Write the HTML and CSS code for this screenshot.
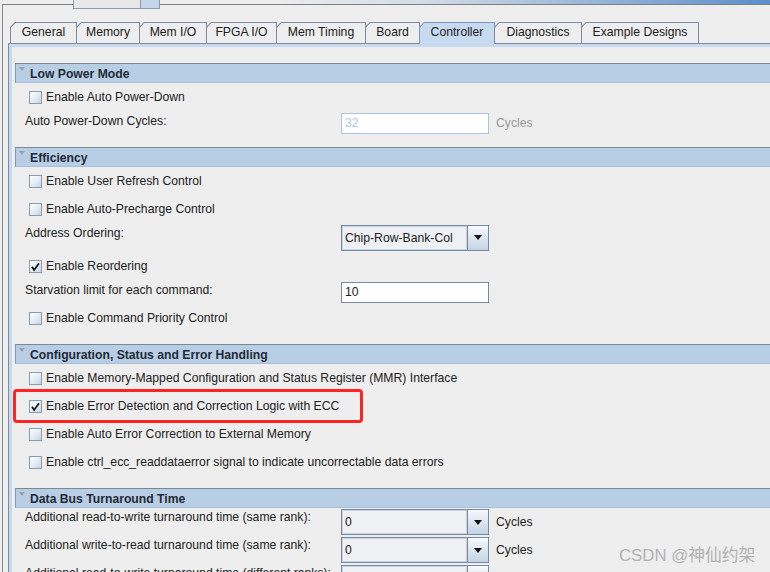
FILE: index.html
```html
<!DOCTYPE html>
<html>
<head>
<meta charset="utf-8">
<link rel="stylesheet" href="styles.css">
</head>
<body>
<div class="topstrip"></div>
<div class="thumb"></div>
<div class="thumb2"></div>
<div class="frame">
  <div class="tabpane">
    <div class="tabs">
      <div class="tab"><div class="tab-in">General</div></div>
      <div class="tab"><div class="tab-in">Memory</div></div>
      <div class="tab"><div class="tab-in">Mem I/O</div></div>
      <div class="tab"><div class="tab-in">FPGA I/O</div></div>
      <div class="tab"><div class="tab-in">Mem Timing</div></div>
      <div class="tab"><div class="tab-in">Board</div></div>
      <div class="tab sel"><div class="tab-in">Controller</div></div>
      <div class="tab"><div class="tab-in">Diagnostics</div></div>
      <div class="tab"><div class="tab-in">Example Designs</div></div>
    </div>
    <div class="panel">
      <div class="panel-in">
        <section class="sec">
          <div class="sec-head"><span class="tri"></span>Low Power Mode</div>
          <div class="sec-body">
            <div class="cb-row"><span class="cb"></span><span>Enable Auto Power-Down</span></div>
            <div class="field-row">
              <span class="lbl">Auto Power-Down Cycles:</span>
              <span class="input dis">32</span>
              <span class="unit dim">Cycles</span>
            </div>
          </div>
        </section>
        <section class="sec">
          <div class="sec-head"><span class="tri"></span>Efficiency</div>
          <div class="sec-body">
            <div class="cb-row"><span class="cb"></span><span>Enable User Refresh Control</span></div>
            <div class="cb-row"><span class="cb"></span><span>Enable Auto-Precharge Control</span></div>
            <div class="field-row">
              <span class="lbl">Address Ordering:</span>
              <span class="combo"><span class="combo-text">Chip-Row-Bank-Col</span><span class="combo-btn"></span></span>
            </div>
            <div class="cb-row"><span class="cb on"><svg width="11" height="11" viewBox="0 0 11 11"><path d="M2 5.8 L4.1 9 L9 2.2" fill="none" stroke="#111" stroke-width="1.7"/></svg></span><span>Enable Reordering</span></div>
            <div class="field-row">
              <span class="lbl">Starvation limit for each command:</span>
              <span class="input">10</span>
            </div>
            <div class="cb-row"><span class="cb"></span><span>Enable Command Priority Control</span></div>
          </div>
        </section>
        <section class="sec">
          <div class="sec-head"><span class="tri"></span>Configuration, Status and Error Handling</div>
          <div class="sec-body">
            <div class="cb-row"><span class="cb"></span><span>Enable Memory-Mapped Configuration and Status Register (MMR) Interface</span></div>
            <div class="cb-row"><span class="cb on"><svg width="11" height="11" viewBox="0 0 11 11"><path d="M2 5.8 L4.1 9 L9 2.2" fill="none" stroke="#111" stroke-width="1.7"/></svg></span><span>Enable Error Detection and Correction Logic with ECC</span></div>
            <div class="cb-row"><span class="cb"></span><span>Enable Auto Error Correction to External Memory</span></div>
            <div class="cb-row"><span class="cb"></span><span>Enable ctrl_ecc_readdataerror signal to indicate uncorrectable data errors</span></div>
          </div>
        </section>
        <section class="sec">
          <div class="sec-head"><span class="tri"></span>Data Bus Turnaround Time</div>
          <div class="sec-body">
            <div class="field-row tight">
              <span class="lbl">Additional read-to-write turnaround time (same rank):</span>
              <span class="combo"><span class="combo-text">0</span><span class="combo-btn"></span></span>
              <span class="unit">Cycles</span>
            </div>
            <div class="field-row tight">
              <span class="lbl">Additional write-to-read turnaround time (same rank):</span>
              <span class="combo"><span class="combo-text">0</span><span class="combo-btn"></span></span>
              <span class="unit">Cycles</span>
            </div>
            <div class="field-row tight">
              <span class="lbl">Additional read-to-write turnaround time (different ranks):</span>
              <span class="combo"><span class="combo-text">0</span><span class="combo-btn"></span></span>
              <span class="unit">Cycles</span>
            </div>
          </div>
        </section>
      </div>
    </div>
  </div>
</div>
<div class="redbox"></div>
<div class="watermark">CSDN @神仙约架</div>
</body>
</html>
```
FILE: styles.css
```css
* { box-sizing: border-box; }
html, body { margin: 0; padding: 0; }
body {
  width: 770px;
  height: 572px;
  overflow: hidden;
  position: relative;
  background: #eeeeee;
  font-family: "Liberation Sans", Arial, sans-serif;
  font-size: 12.2px;
  color: #222222;
}
.topstrip {
  height: 4px;
  background: linear-gradient(to right, #eeeeee 0px, #eeeeee 260px, #d3dde8 420px, #8fb0d6 620px, #5b8ecd 770px);
}
.thumb {
  position: absolute;
  left: 73px; top: 0;
  width: 68px; height: 9px;
  background: #e8e8e8;
  border: 1px solid #8b9aab;
  border-top: none;
}
.thumb2 {
  position: absolute;
  left: 140px; top: 0;
  width: 20px; height: 9px;
  background: #c5d6e9;
  border: 1px solid #8b9aab;
  border-top: none;
}
.frame {
  margin-left: 2px;
  width: 820px;
  height: 620px;
  border-top: 1px solid #7f7f7f;
  border-left: 1px solid #8a8a8a;
  padding: 17px 0 0 5px;
}
.tabs {
  display: flex;
  align-items: flex-start;
  height: 22px;
  padding-left: 2px;
  margin-bottom: -1px;
  position: relative;
  z-index: 1;
}
.tab {
  height: 21px;
  margin-left: -1px;
  padding: 1px 1px 0 1px;
  background: #7d8c9e;
  clip-path: polygon(5px 0, 100% 0, 100% 100%, 0 100%, 0 5px);
}
.tab:first-child { margin-left: 0; }
.tab-in {
  height: 100%;
  background: #eeeeee;
  clip-path: polygon(4.4px 0, 100% 0, 100% 100%, 0 100%, 0 4.4px);
  display: flex;
  align-items: center;
  justify-content: center;
  white-space: nowrap;
  padding-bottom: 2px;
}
.tab.sel { height: 22px; background: #7895c4; }
.tab.sel .tab-in { background: #c8daf0; padding-bottom: 3px; }
.tab:nth-child(1) { width: 67px; }
.tab:nth-child(2) { width: 64px; }
.tab:nth-child(3) { width: 68px; }
.tab:nth-child(4) { width: 71px; }
.tab:nth-child(5) { width: 90px; }
.tab:nth-child(6) { width: 55px; }
.tab:nth-child(7) { width: 76px; }
.tab:nth-child(8) { width: 88px; }
.tab:nth-child(9) { width: 118px; }
.panel {
  border-top: 1px solid #7d8c9e;
  border-left: 1px solid #7d8c9e;
}
.panel-in {
  border-top: 3px solid #c8daf0;
  border-left: 3px solid #c8daf0;
  padding: 16px 0 0 3px;
}
.sec-head {
  position: relative;
  height: 20px;
  display: flex;
  align-items: center;
  padding-left: 14px;
  padding-top: 1px;
  background: #b8cee5;
  border-top: 1px solid #7b8794;
  border-left: 1px solid #8796a6;
  border-bottom: 1px solid #a9bfd6;
  font-weight: bold;
  color: #1f2a36;
}
.tri {
  position: absolute;
  left: 3px; top: 3px;
  width: 0; height: 0;
  border-left: 3px solid transparent;
  border-right: 3px solid transparent;
  border-top: 4px solid #95a4b5;
}
.sec-body { padding-bottom: 12px; }
.cb-row {
  height: 28px;
  display: flex;
  align-items: center;
  gap: 4px;
  padding-left: 14px;
  white-space: nowrap;
}
.cb {
  flex: none;
  width: 13px;
  height: 13px;
  border: 1px solid #8a9cb2;
  background: linear-gradient(135deg, #ffffff 0%, #e4ebf3 55%, #c8d5e3 100%);
  display: flex;
  align-items: center;
  justify-content: center;
}
.cb svg { display: block; }
.field-row {
  display: flex;
  align-items: flex-start;
  padding: 1.5px 0 1.5px 10px;
  white-space: nowrap;
}
.field-row.tight { padding: 1px 0 1px 10px; }
.lbl {
  width: 316px;
  flex: none;
  padding-top: 1px;
  line-height: 15px;
}
.input {
  flex: none;
  width: 148px;
  height: 21px;
  border: 1px solid #7a8a9e;
  background: #ffffff;
  padding-left: 3px;
  display: flex;
  align-items: center;
}
.input.dis {
  border-color: #a9c7e2;
  color: #b3c6da;
}
.unit {
  align-self: center;
  margin-left: 7px;
}
.unit.dim { color: #9a9a9a; }
.combo {
  flex: none;
  display: flex;
  width: 148px;
  height: 26px;
}
.combo-text {
  flex: 1;
  border: 1px solid #7a8a9e;
  box-shadow: inset 0 0 0 1px #c6d5e6;
  background: #eef0f3;
  padding-left: 3px;
  display: flex;
  align-items: center;
}
.combo-btn {
  flex: none;
  width: 21px;
  border: 1px solid #7a8a9e;
  border-left: none;
  background: linear-gradient(#f7f9fc, #c3d3e5);
  display: flex;
  align-items: center;
  justify-content: center;
}
.combo-btn::after {
  content: "";
  width: 0; height: 0;
  border-left: 4px solid transparent;
  border-right: 4px solid transparent;
  border-top: 5px solid #111111;
}
.redbox {
  position: absolute;
  left: 13px; top: 389px;
  width: 350px; height: 34px;
  border: 3px solid #ff2424;
  border-radius: 4px;
}
.watermark {
  position: absolute;
  left: 619px; top: 542px;
  font-family: "Liberation Sans", "Noto Sans CJK SC", sans-serif;
  font-size: 16.8px;
  color: #b2b2b2;
  white-space: nowrap;
}
```
